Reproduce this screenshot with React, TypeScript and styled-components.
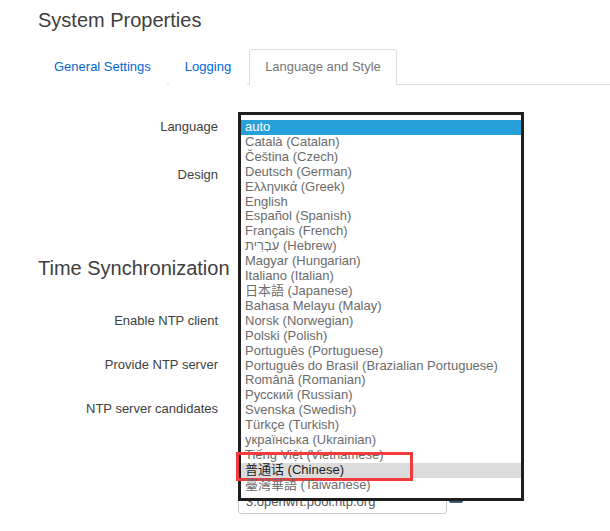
import { FC } from 'react'
import { createGlobalStyle, styled } from 'styled-components'

const GlobalStyle = createGlobalStyle`
  html, body {
    margin: 0;
    padding: 0;
    background: #fff;
  }
  body {
    font-family: 'Liberation Sans', Arial, 'Noto Sans CJK SC', sans-serif;
    font-size: 13px;
    color: #404040;
    overflow: hidden;
  }
`

const Page = styled.div`
  padding: 9px 0 0 38px;
`

const Heading = styled.h2<{ $gap?: number }>`
  margin: ${({ $gap }) => $gap ?? 0}px 0 0 0;
  font-size: 20px;
  line-height: 22px;
  font-weight: normal;
  color: #404040;
`

const TabBar = styled.ul`
  display: flex;
  margin: 18px 0 0 0;
  padding: 0;
  list-style: none;
  border-bottom: 1px solid #ddd;
`

const Tab = styled.li<{ $active?: boolean }>`
  margin: 0 2px -1px 0;
  padding: 0 15px;
  line-height: 34px;
  border: 1px solid ${({ $active }) => ($active ? '#ddd' : 'transparent')};
  border-bottom-color: ${({ $active }) => ($active ? '#fff' : 'transparent')};
  border-radius: 4px 4px 0 0;
  background: #fff;
  color: ${({ $active }) => ($active ? '#777' : '#0069d6')};
  white-space: nowrap;
`

const Form = styled.div<{ $top: number }>`
  display: flex;
  flex-direction: column;
  padding-top: ${({ $top }) => $top}px;
`

const Row = styled.div<{ $gap: number }>`
  display: grid;
  grid-template-columns: 180px 1fr;
  column-gap: 20px;
  align-items: start;
  margin-bottom: ${({ $gap }) => $gap}px;
`

const Label = styled.div`
  text-align: right;
  line-height: 24px;
  color: #404040;
`

const Control = styled.div`
  position: relative;
  display: flex;
  flex-direction: column;
  gap: 7px;
`

const SelectBox = styled.div`
  box-sizing: border-box;
  width: 209px;
  height: 24px;
  padding: 0 6px;
  border: 1px solid #ccc;
  border-radius: 3px;
  line-height: 22px;
  color: #555;
`

const CheckBox = styled.span`
  display: block;
  width: 13px;
  height: 13px;
  margin-top: 5px;
  border: 1px solid #999;
  border-radius: 2px;
`

const InputLine = styled.div`
  display: flex;
  align-items: flex-start;
  gap: 2px;
`

const TextInput = styled.div`
  box-sizing: border-box;
  width: 209px;
  height: 24px;
  padding: 0 7px;
  border: 1px solid #ccc;
  border-radius: 3px;
  line-height: 22px;
  color: #555;
  white-space: nowrap;
`

const RemoveButton = styled.span`
  display: block;
  width: 14px;
  height: 12px;
  margin-top: 1px;
  background: #3b5878;
  border-radius: 0 0 2px 2px;
`

const DropList = styled.div`
  position: absolute;
  top: -3px;
  left: 0;
  z-index: 10;
  box-sizing: border-box;
  width: 286px;
  padding: 5px 0 5px 0;
  border: 3px solid #1e1e1e;
  background: #fff;
`

const Option = styled.div<{ $state?: 'selected' | 'hover' }>`
  position: relative;
  height: 14.92px;
  padding-left: 4px;
  line-height: 14.92px;
  white-space: nowrap;
  overflow: visible;
  background: ${({ $state }) =>
    $state === 'selected' ? '#279fd8' : $state === 'hover' ? '#dcdcdc' : 'transparent'};
  color: ${({ $state }) =>
    $state === 'selected' ? '#fff' : $state === 'hover' ? '#1e1e1e' : '#6b6b6b'};
`

const Marker = styled.span`
  position: absolute;
  top: -11px;
  left: -5px;
  width: 177px;
  height: 29px;
  box-sizing: border-box;
  border: 3px solid #f23b3b;
  pointer-events: none;
`

const languages = [
  'auto',
  'Català (Catalan)',
  'Čeština (Czech)',
  'Deutsch (German)',
  'Ελληνικά (Greek)',
  'English',
  'Español (Spanish)',
  'Français (French)',
  'עִבְרִית (Hebrew)',
  'Magyar (Hungarian)',
  'Italiano (Italian)',
  '日本語 (Japanese)',
  'Bahasa Melayu (Malay)',
  'Norsk (Norwegian)',
  'Polski (Polish)',
  'Português (Portuguese)',
  'Português do Brasil (Brazialian Portuguese)',
  'Română (Romanian)',
  'Русский (Russian)',
  'Svenska (Swedish)',
  'Türkçe (Turkish)',
  'українська (Ukrainian)',
  'Tiếng Việt (Vietnamese)',
  '普通话 (Chinese)',
  '臺灣華語 (Taiwanese)',
]

const servers = [
  '0.openwrt.pool.ntp.org',
  '1.openwrt.pool.ntp.org',
  '2.openwrt.pool.ntp.org',
  '3.openwrt.pool.ntp.org',
]

const LanguageList: FC = () => (
  <DropList>
    {languages.map((name, i) => {
      const state = i === 0 ? 'selected' : name.startsWith('普通话') ? 'hover' : undefined
      return (
        <Option key={name} $state={state}>
          {name}
          {state === 'hover' && <Marker />}
        </Option>
      )
    })}
  </DropList>
)

const App: FC = () => {
  return (
    <>
      <GlobalStyle />
      <Page>
        <Heading>System Properties</Heading>
        <TabBar>
          <Tab>General Settings</Tab>
          <Tab>Logging</Tab>
          <Tab $active>Language and Style</Tab>
        </TabBar>

        <Form $top={30}>
          <Row $gap={24}>
            <Label>Language</Label>
            <Control>
              <SelectBox>auto</SelectBox>
              <LanguageList />
            </Control>
          </Row>
          <Row $gap={0}>
            <Label>Design</Label>
            <Control>
              <SelectBox>Bootstrap</SelectBox>
            </Control>
          </Row>
        </Form>

        <Heading $gap={70}>Time Synchronization</Heading>

        <Form $top={30}>
          <Row $gap={20}>
            <Label>Enable NTP client</Label>
            <Control>
              <CheckBox />
            </Control>
          </Row>
          <Row $gap={20}>
            <Label>Provide NTP server</Label>
            <Control>
              <CheckBox />
            </Control>
          </Row>
          <Row $gap={0}>
            <Label>NTP server candidates</Label>
            <Control>
              {servers.map((server) => (
                <InputLine key={server}>
                  <TextInput>{server}</TextInput>
                  <RemoveButton />
                </InputLine>
              ))}
            </Control>
          </Row>
        </Form>
      </Page>
    </>
  )
}

export default App
